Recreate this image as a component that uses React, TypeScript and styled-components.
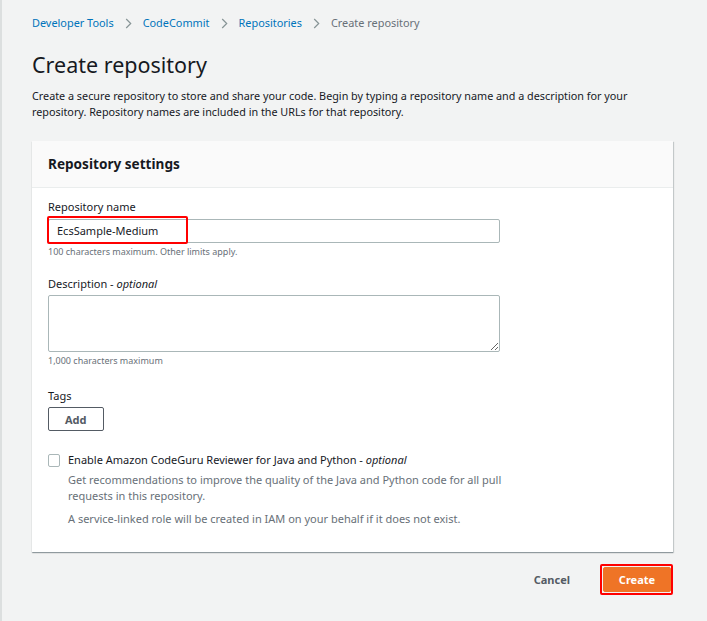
import React from "react";
import styled, { createGlobalStyle } from "styled-components";

const GlobalStyle = createGlobalStyle`
  html, body {
    margin: 0;
    padding: 0;
    background: #f2f3f3;
  }
  body {
    font-family: "Noto Sans", "Open Sans", sans-serif;
    color: #16191f;
  }
`;

const Page = styled.div`
  min-height: 621px;
  box-sizing: border-box;
  border-left: 2px solid #dcdfdf;
  padding: 14px 34px 0 30px;
`;

const Breadcrumbs = styled.nav`
  display: flex;
  align-items: center;
  gap: 11px;
  font-size: 10.9px;
  line-height: 18px;
`;

const Crumb = styled.a<{ $current?: boolean }>`
  color: ${(p) => (p.$current ? "#687078" : "#0073bb")};
  text-decoration: none;
`;

const Chevron = styled.span`
  display: inline-flex;
  color: #879596;
`;

const Title = styled.h1`
  margin: 19px 0 0;
  font-size: 21.5px;
  line-height: 28px;
  font-weight: 400;
`;

const Intro = styled.p`
  margin: 9px 0 0;
  font-size: 10.8px;
  line-height: 16px;
  max-width: 610px;
`;

const Card = styled.section`
  margin-top: 21px;
  background: #fff;
  box-shadow: 0 1px 1px 0 rgba(0, 28, 36, 0.3), 1px 1px 1px 0 rgba(0, 28, 36, 0.15);
`;

const CardHeader = styled.header`
  background: #fafafa;
  border-bottom: 1px solid #eaeded;
  padding: 13px 16px 13px;
  font-size: 13.6px;
  font-weight: 700;
  line-height: 20px;
`;

const CardBody = styled.div`
  padding: 11px 16px 25px;
`;

const Field = styled.div<{ $gap?: number }>`
  margin-bottom: ${(p) => p.$gap ?? 18}px;
`;

const Label = styled.label`
  display: block;
  font-size: 11px;
  line-height: 16px;
  margin-bottom: 3px;
  em {
    font-style: italic;
  }
`;

const InputWrap = styled.div`
  position: relative;
  width: 452px;
`;

const TextInput = styled.input`
  box-sizing: border-box;
  width: 100%;
  height: 24px;
  border: 1px solid #aab7b8;
  border-radius: 2px;
  padding: 0 8px;
  font-family: inherit;
  font-size: 11px;
  color: #16191f;
  outline: none;
`;

const TextArea = styled.textarea`
  display: block;
  box-sizing: border-box;
  width: 452px;
  height: 57px;
  border: 1px solid #aab7b8;
  border-radius: 2px;
  resize: vertical;
  font-family: inherit;
  outline: none;
`;

const Highlight = styled.span<{ $inset: string }>`
  position: absolute;
  inset: ${(p) => p.$inset};
  box-sizing: border-box;
  border: 2px solid #ff0000;
  border-radius: 2px;
  pointer-events: none;
`;

const Hint = styled.div`
  margin-top: 3px;
  font-size: 9px;
  line-height: 12px;
  color: #687078;
`;

const SecondaryButton = styled.button`
  box-sizing: border-box;
  height: 24px;
  padding: 0 16px;
  background: #fff;
  border: 1px solid #545b64;
  border-radius: 2px;
  font-family: inherit;
  font-size: 11px;
  font-weight: 700;
  color: #545b64;
`;

const CheckRow = styled.div`
  display: flex;
  gap: 8px;
  margin-top: 21px;
`;

const Box = styled.span`
  flex: none;
  width: 10px;
  height: 11px;
  margin-top: 2px;
  border: 1px solid #aab7b8;
  border-radius: 2px;
  background: #fff;
`;

const CheckText = styled.div`
  font-size: 11px;
  line-height: 16px;
  em {
    font-style: italic;
  }
`;

const CheckDesc = styled.p`
  margin: 4px 0 0;
  width: 450px;
  font-size: 11px;
  line-height: 16px;
  color: #687078;
  & + & {
    margin-top: 7px;
  }
`;

const Actions = styled.div`
  display: flex;
  justify-content: flex-end;
  align-items: center;
  gap: 30px;
  margin-top: 12px;
`;

const LinkButton = styled.button`
  background: none;
  border: none;
  font-family: inherit;
  font-size: 11px;
  font-weight: 700;
  color: #545b64;
  padding: 0;
`;

const PrimaryWrap = styled.div`
  position: relative;
  display: flex;
  padding: 3px 2px 3px 3px;
`;

const PrimaryButton = styled.button`
  box-sizing: border-box;
  width: 68px;
  height: 25px;
  padding: 0;
  background: #ef7426;
  border: 1px solid #ef7426;
  border-radius: 2px;
  font-family: inherit;
  font-size: 11px;
  font-weight: 700;
  color: #fff;
`;

const ChevronIcon = () => (
  <svg width="7" height="11" viewBox="0 0 7 11">
    <path d="M1.2 1l4.5 4.5-4.5 4.5" fill="none" stroke="currentColor" strokeWidth="1.2" />
  </svg>
);

export default function App() {
  return (
    <>
      <GlobalStyle />
      <Page>
        <Breadcrumbs>
          <Crumb href="#">Developer Tools</Crumb>
          <Chevron><ChevronIcon /></Chevron>
          <Crumb href="#">CodeCommit</Crumb>
          <Chevron><ChevronIcon /></Chevron>
          <Crumb href="#">Repositories</Crumb>
          <Chevron><ChevronIcon /></Chevron>
          <Crumb $current>Create repository</Crumb>
        </Breadcrumbs>
        <Title>Create repository</Title>
        <Intro>
          Create a secure repository to store and share your code. Begin by typing a repository name and a
          description for your repository. Repository names are included in the URLs for that repository.
        </Intro>
        <Card>
          <CardHeader>Repository settings</CardHeader>
          <CardBody>
            <Field>
              <Label>Repository name</Label>
              <InputWrap>
                <TextInput defaultValue="EcsSample-Medium" />
                <Highlight $inset="-2px auto -1px -1px" style={{ width: 141 }} />
              </InputWrap>
              <Hint>100 characters maximum. Other limits apply.</Hint>
            </Field>
            <Field $gap={21}>
              <Label>
                Description - <em>optional</em>
              </Label>
              <TextArea />
              <Hint>1,000 characters maximum</Hint>
            </Field>
            <div>
              <Label>Tags</Label>
              <SecondaryButton>Add</SecondaryButton>
            </div>
            <CheckRow>
              <Box />
              <div>
                <CheckText>
                  Enable Amazon CodeGuru Reviewer for Java and Python - <em>optional</em>
                </CheckText>
                <CheckDesc>
                  Get recommendations to improve the quality of the Java and Python code for all pull requests in
                  this repository.
                </CheckDesc>
                <CheckDesc>A service-linked role will be created in IAM on your behalf if it does not exist.</CheckDesc>
              </div>
            </CheckRow>
          </CardBody>
        </Card>
        <Actions>
          <LinkButton>Cancel</LinkButton>
          <PrimaryWrap>
            <PrimaryButton>Create</PrimaryButton>
            <Highlight $inset="0" />
          </PrimaryWrap>
        </Actions>
      </Page>
    </>
  );
}
